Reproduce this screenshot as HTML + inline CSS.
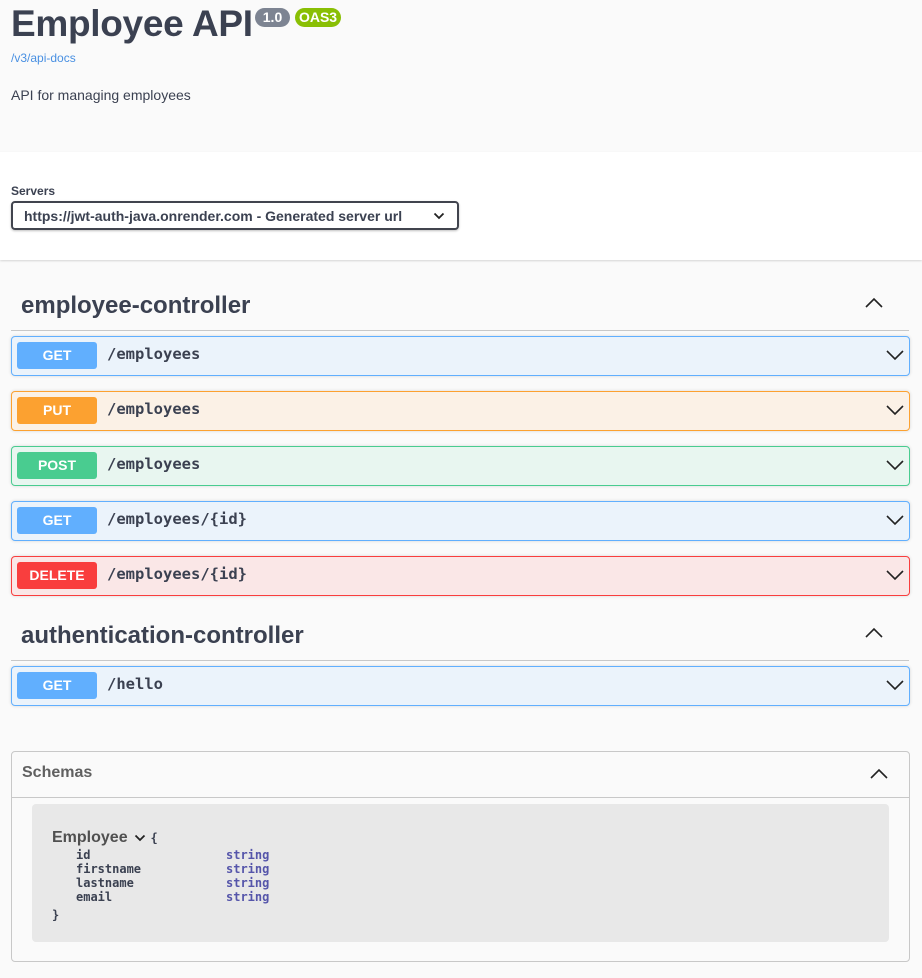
<!DOCTYPE html>
<html><head><meta charset="utf-8"><style>
*{box-sizing:border-box;margin:0;padding:0}
body{width:922px;height:978px;background:#fafafa;font-family:"Liberation Sans",sans-serif;color:#3b4151;position:relative;overflow:hidden}
.abs{position:absolute}
h1{position:absolute;left:11px;top:3px;font-size:37px;font-weight:bold;color:#3b4151;letter-spacing:-0.3px}
.badge{position:absolute;top:8px;height:19px;border-radius:10px;color:#fff;font-size:14px;font-weight:bold;line-height:19px;text-align:center}
.servers{position:absolute;left:0;top:152px;width:922px;height:108px;background:#fff;box-shadow:0 1px 2px rgba(0,0,0,.15)}
.sel{position:absolute;left:11px;top:49px;width:448px;height:29px;border:2px solid #41444e;border-radius:4px;box-shadow:0 1px 2px rgba(0,0,0,.25);font-size:14px;font-weight:bold;padding:5px 0 0 11px}
.tag{position:absolute;left:11px;width:898px;height:48px;border-bottom:1px solid #c8c8c8;font-size:24px;font-weight:bold;padding:9px 0 0 10px}
.op{position:absolute;left:11px;width:899px;height:40px;border:1px solid;border-radius:4px;box-shadow:0 0 3px rgba(0,0,0,.15)}
.op .m{position:absolute;left:5px;top:5px;width:80px;height:27px;border-radius:3px;color:#fff;font-weight:bold;font-size:14px;line-height:27px;text-align:center}
.op .p{position:absolute;left:95px;top:8px;font-family:"DejaVu Sans Mono","Liberation Mono",monospace;font-weight:bold;font-size:15.5px;color:#3b4151}
.chev{position:absolute}
.op .chev{top:12px}
.get{background:#ebf3fb;border-color:#61affe}.get .m{background:#61affe}
.put{background:#fbf1e6;border-color:#fca130}.put .m{background:#fca130}
.post{background:#e8f6f0;border-color:#49cc90}.post .m{background:#49cc90}
.del{background:#fae7e7;border-color:#f93e3e}.del .m{background:#f93e3e}
.mono{font-family:"DejaVu Sans Mono","Liberation Mono",monospace;font-size:12px;font-weight:bold;line-height:14px}
</style></head><body>
<h1>Employee API</h1>
<div class="badge" style="left:255px;width:35px;background:#7d8492">1.0</div>
<div class="badge" style="left:295px;width:46px;background:#89bf04">OAS3</div>
<div class="abs" style="left:11px;top:51px;font-size:12px;color:#4990e2">/v3/api-docs</div>
<div class="abs" style="left:11px;top:87px;font-size:14px">API for managing employees</div>

<div class="servers">
<div class="abs" style="left:11px;top:32px;font-size:12px;font-weight:bold">Servers</div>
<div class="sel">https://jwt-auth-java.onrender.com - Generated server url
<svg class="chev" style="left:420px;top:9px" width="12" height="8" viewBox="0 0 12 8"><path d="M1.5 1.5L6 6L10.5 1.5" stroke="#222" stroke-width="1.8" fill="none"/></svg></div>
</div>

<div class="tag" style="top:283px">employee-controller
<svg class="chev" style="left:853px;top:14px" width="20" height="12" viewBox="0 0 20 12"><path d="M2 10L10 2L18 10" stroke="#222" stroke-width="1.6" fill="none"/></svg></div>

<div class="op get" style="top:336px"><div class="m">GET</div><div class="p">/employees</div><svg class="chev" style="left:873px" width="20" height="12" viewBox="0 0 20 12"><path d="M2 2L10 10L18 2" stroke="#222" stroke-width="1.6" fill="none"/></svg></div>
<div class="op put" style="top:391px"><div class="m">PUT</div><div class="p">/employees</div><svg class="chev" style="left:873px" width="20" height="12" viewBox="0 0 20 12"><path d="M2 2L10 10L18 2" stroke="#222" stroke-width="1.6" fill="none"/></svg></div>
<div class="op post" style="top:446px"><div class="m">POST</div><div class="p">/employees</div><svg class="chev" style="left:873px" width="20" height="12" viewBox="0 0 20 12"><path d="M2 2L10 10L18 2" stroke="#222" stroke-width="1.6" fill="none"/></svg></div>
<div class="op get" style="top:501px"><div class="m">GET</div><div class="p">/employees/{id}</div><svg class="chev" style="left:873px" width="20" height="12" viewBox="0 0 20 12"><path d="M2 2L10 10L18 2" stroke="#222" stroke-width="1.6" fill="none"/></svg></div>
<div class="op del" style="top:556px"><div class="m">DELETE</div><div class="p">/employees/{id}</div><svg class="chev" style="left:873px" width="20" height="12" viewBox="0 0 20 12"><path d="M2 2L10 10L18 2" stroke="#222" stroke-width="1.6" fill="none"/></svg></div>

<div class="tag" style="top:613px">authentication-controller
<svg class="chev" style="left:853px;top:14px" width="20" height="12" viewBox="0 0 20 12"><path d="M2 10L10 2L18 10" stroke="#222" stroke-width="1.6" fill="none"/></svg></div>
<div class="op get" style="top:666px"><div class="m">GET</div><div class="p">/hello</div><svg class="chev" style="left:873px" width="20" height="12" viewBox="0 0 20 12"><path d="M2 2L10 10L18 2" stroke="#222" stroke-width="1.6" fill="none"/></svg></div>

<div class="abs" style="left:11px;top:751px;width:899px;height:211px;border:1px solid #c8c8c8;border-radius:4px">
<div class="abs" style="left:0;top:0;width:897px;height:46px;border-bottom:1px solid #c8c8c8;font-size:16px;font-weight:bold;color:#606060;padding:12px 0 0 10px">Schemas
<svg class="chev" style="left:857px;top:16px" width="20" height="12" viewBox="0 0 20 12"><path d="M2 10L10 2L18 10" stroke="#222" stroke-width="1.6" fill="none"/></svg></div>
<div class="abs" style="left:20px;top:52px;width:857px;height:138px;background:#e8e8e8;border-radius:4px">
<div class="abs" style="left:20px;top:25px;font-size:16px;font-weight:bold;color:#505050">Employee <svg width="12" height="8" viewBox="0 0 12 8" style="margin-left:2px"><path d="M1.5 1.5L6 6L10.5 1.5" stroke="#222" stroke-width="1.8" fill="none"/></svg> <span class="mono" style="color:#3b4151">{</span></div>
<div class="abs mono" style="left:44px;top:44px;color:#3b4151">id<br>firstname<br>lastname<br>email</div>
<div class="abs mono" style="left:194px;top:44px;color:#55a;">string<br>string<br>string<br>string</div>
<div class="abs mono" style="left:20px;top:104px;color:#3b4151">}</div>
</div>
</div>
</body></html>
